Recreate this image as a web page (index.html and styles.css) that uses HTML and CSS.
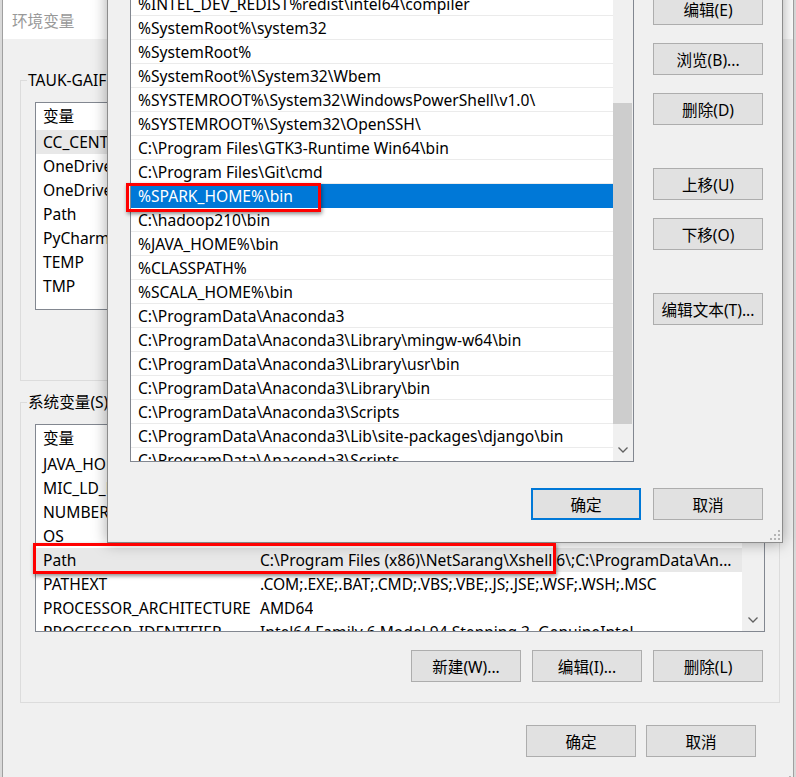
FILE: index.html
```html
<!DOCTYPE html>
<html lang="zh-CN">
<head>
  <meta charset="UTF-8">
  <meta name="viewport" content="width=device-width, initial-scale=1.0">
  <title>环境变量</title>
  <link rel="stylesheet" href="styles.css">
</head>
<body>
<div class="desktop">

  <!-- background window: 环境变量 -->
  <div class="window env-window">
    <div class="title-bar">环境变量</div>
    <div class="env-body">

      <div class="group">
        <div class="group-title">TAUK-GAIFU 的用户变量(U)</div>
        <div class="listview">
          <div class="lv-items">
            <div class="lv-row lv-head"><span class="lv-name">变量</span><span class="lv-value">值</span></div>
            <div class="lv-row is-focus"><span class="lv-name">CC_CENTER</span><span class="lv-value">C:\Program Files\CC</span></div>
            <div class="lv-row"><span class="lv-name">OneDrive</span><span class="lv-value">C:\Users\TAUK\OneDrive</span></div>
            <div class="lv-row"><span class="lv-name">OneDriveConsumer</span><span class="lv-value">C:\Users\TAUK\OneDrive</span></div>
            <div class="lv-row"><span class="lv-name">Path</span><span class="lv-value">%USERPROFILE%\AppData\Local\Microsoft\WindowsApps;</span></div>
            <div class="lv-row"><span class="lv-name">PyCharm Community Edition</span><span class="lv-value">C:\Program Files\JetBrains\PyCharm\bin;</span></div>
            <div class="lv-row"><span class="lv-name">TEMP</span><span class="lv-value">%USERPROFILE%\AppData\Local\Temp</span></div>
            <div class="lv-row"><span class="lv-name">TMP</span><span class="lv-value">%USERPROFILE%\AppData\Local\Temp</span></div>
          </div>
        </div>
        <div class="btn-row">
          <button class="btn">新建(N)...</button>
          <button class="btn">编辑(E)...</button>
          <button class="btn">删除(D)</button>
        </div>
      </div>

      <div class="group">
        <div class="group-title">系统变量(S)</div>
        <div class="listview">
          <div class="lv-items">
            <div class="lv-row lv-head"><span class="lv-name">变量</span><span class="lv-value">值</span></div>
            <div class="lv-row"><span class="lv-name">JAVA_HOME</span><span class="lv-value">C:\Program Files\Java\jdk1.8.0_231</span></div>
            <div class="lv-row"><span class="lv-name">MIC_LD_LIBRARY_PATH</span><span class="lv-value">%INTEL_DEV_REDIST%compiler\lib\mic</span></div>
            <div class="lv-row"><span class="lv-name">NUMBER_OF_PROCESSORS</span><span class="lv-value">4</span></div>
            <div class="lv-row"><span class="lv-name">OS</span><span class="lv-value">Windows_NT</span></div>
            <div class="lv-row is-focus"><span class="lv-name">Path</span><span class="lv-value">C:\Program Files (x86)\NetSarang\Xshell 6\;C:\ProgramData\An...</span></div>
            <div class="lv-row"><span class="lv-name">PATHEXT</span><span class="lv-value">.COM;.EXE;.BAT;.CMD;.VBS;.VBE;.JS;.JSE;.WSF;.WSH;.MSC</span></div>
            <div class="lv-row"><span class="lv-name">PROCESSOR_ARCHITECTURE</span><span class="lv-value">AMD64</span></div>
            <div class="lv-row"><span class="lv-name">PROCESSOR_IDENTIFIER</span><span class="lv-value">Intel64 Family 6 Model 94 Stepping 3, GenuineIntel</span></div>
          </div>
          <div class="lv-scroll">
            <div class="lv-thumb"></div>
            <div class="scroll-down">
              <svg width="10" height="6" viewBox="0 0 10 6"><polyline points="0.5,0.5 5,5 9.5,0.5" fill="none" stroke="#606060" stroke-width="1.3"/></svg>
            </div>
          </div>
        </div>
        <div class="btn-row">
          <button class="btn">新建(W)...</button>
          <button class="btn">编辑(I)...</button>
          <button class="btn">删除(L)</button>
        </div>
      </div>

      <div class="dialog-buttons env-buttons">
        <button class="btn">确定</button>
        <button class="btn">取消</button>
      </div>
    </div>
    <svg class="grip" width="10" height="10" viewBox="0 0 10 10" fill="#b5b5b5">
      <rect x="8" y="0" width="2" height="2"/><rect x="4" y="4" width="2" height="2"/><rect x="8" y="4" width="2" height="2"/>
      <rect x="0" y="8" width="2" height="2"/><rect x="4" y="8" width="2" height="2"/><rect x="8" y="8" width="2" height="2"/>
    </svg>
  </div>

  <!-- foreground window: 编辑环境变量 -->
  <div class="window edit-window">
    <div class="title-bar">编辑环境变量</div>
    <div class="edit-body">
      <div class="edit-main">
        <div class="pathlist">
          <div class="path-items">
            <div class="path-row">C:\Program Files (x86)\NetSarang\Xshell 6\</div>
            <div class="path-row">C:\ProgramData\Oracle\Java\javapath</div>
            <div class="path-row">%INTEL_DEV_REDIST%redist\intel64\compiler</div>
            <div class="path-row">%SystemRoot%\system32</div>
            <div class="path-row">%SystemRoot%</div>
            <div class="path-row">%SystemRoot%\System32\Wbem</div>
            <div class="path-row">%SYSTEMROOT%\System32\WindowsPowerShell\v1.0\</div>
            <div class="path-row">%SYSTEMROOT%\System32\OpenSSH\</div>
            <div class="path-row">C:\Program Files\GTK3-Runtime Win64\bin</div>
            <div class="path-row">C:\Program Files\Git\cmd</div>
            <div class="path-row is-selected">%SPARK_HOME%\bin</div>
            <div class="path-row">C:\hadoop210\bin</div>
            <div class="path-row">%JAVA_HOME%\bin</div>
            <div class="path-row">%CLASSPATH%</div>
            <div class="path-row">%SCALA_HOME%\bin</div>
            <div class="path-row">C:\ProgramData\Anaconda3</div>
            <div class="path-row">C:\ProgramData\Anaconda3\Library\mingw-w64\bin</div>
            <div class="path-row">C:\ProgramData\Anaconda3\Library\usr\bin</div>
            <div class="path-row">C:\ProgramData\Anaconda3\Library\bin</div>
            <div class="path-row">C:\ProgramData\Anaconda3\Scripts</div>
            <div class="path-row">C:\ProgramData\Anaconda3\Lib\site-packages\django\bin</div>
            <div class="path-row">C:\ProgramData\Anaconda3\Scripts</div>
          </div>
          <div class="path-scroll">
            <div class="path-thumb"></div>
            <div class="scroll-down">
              <svg width="10" height="6" viewBox="0 0 10 6"><polyline points="0.5,0.5 5,5 9.5,0.5" fill="none" stroke="#606060" stroke-width="1.3"/></svg>
            </div>
          </div>
        </div>
        <div class="side-buttons">
          <button class="btn">新建(N)</button>
          <button class="btn">编辑(E)</button>
          <button class="btn">浏览(B)...</button>
          <button class="btn">删除(D)</button>
          <button class="btn btn-gap">上移(U)</button>
          <button class="btn">下移(O)</button>
          <button class="btn btn-gap">编辑文本(T)...</button>
        </div>
      </div>
      <div class="dialog-buttons">
        <button class="btn is-default">确定</button>
        <button class="btn">取消</button>
      </div>
    </div>
    <svg class="grip" width="10" height="10" viewBox="0 0 10 10" fill="#b5b5b5">
      <rect x="8" y="0" width="2" height="2"/><rect x="4" y="4" width="2" height="2"/><rect x="8" y="4" width="2" height="2"/>
      <rect x="0" y="8" width="2" height="2"/><rect x="4" y="8" width="2" height="2"/><rect x="8" y="8" width="2" height="2"/>
    </svg>
  </div>

  <!-- red annotation boxes -->
  <div class="mark mark-spark"></div>
  <div class="mark mark-path"></div>

</div>
</body>
</html>
```

FILE: styles.css
```css
* {
  box-sizing: border-box;
}

body {
  margin: 0;
  font-family: "Noto Sans", "Noto Sans CJK SC", sans-serif;
  font-size: 15.6px;
  color: #000;
  background: #d9d9d9;
}

.desktop {
  position: relative;
  width: 796px;
  height: 777px;
  overflow: hidden;
}

/* windows on the desktop */
.window {
  position: absolute;
  background: #f0f0f0;
}

.title-bar {
  height: 39px;
  padding-left: 9px;
  line-height: 43px;
  background: #fff;
  color: #999;
}

.grip {
  position: absolute;
  right: 2px;
  bottom: 2px;
}

.btn {
  display: flex;
  align-items: center;
  justify-content: center;
  width: 110px;
  height: 32px;
  padding: 0;
  border: 1px solid #adadad;
  background: #e1e1e1;
  color: #000;
  font: inherit;
}

.btn.is-default {
  border: 2px solid #0078d7;
}

.dialog-buttons {
  display: flex;
  justify-content: flex-end;
  gap: 12px;
}

/* 环境变量 */
.env-window {
  left: 2px;
  top: -1px;
  width: 792px;
  height: 790px;
  border: 1px solid #a0a0a0;
}

.env-body {
  padding: 41px 13px 0 17px;
}

.group {
  border: 1px solid #dcdcdc;
  padding-bottom: 20px;
}

.group + .group {
  margin-top: 21px;
}

.group-title {
  width: fit-content;
  margin: -11px 0 0 6px;
  padding: 0 1px;
  line-height: 20px;
  background: #f0f0f0;
}

.listview {
  display: flex;
  width: 730px;
  height: 208px;
  margin: 12px 0 0 14px;
  border: 1px solid #828790;
  background: #fff;
  overflow: hidden;
}

.lv-items {
  flex: 1;
  min-width: 0;
}

.lv-row {
  display: flex;
  height: 24px;
  line-height: 24px;
  white-space: nowrap;
}

.lv-row.lv-head {
  height: 27px;
  line-height: 27px;
}

.lv-row.is-focus {
  background: #e8e8e8;
}

.lv-name {
  flex: none;
  width: 217px;
  padding-left: 7px;
  overflow: hidden;
}

.lv-value {
  padding-left: 7px;
  overflow: hidden;
}

.lv-scroll {
  display: flex;
  flex-direction: column;
  width: 22px;
  background: #f0f0f0;
}

.lv-thumb {
  height: 40px;
  margin: 22px 1px 0;
  background: #cdcdcd;
}

.scroll-down {
  display: flex;
  align-items: center;
  justify-content: center;
  height: 22px;
  margin-top: auto;
}

.btn-row {
  display: flex;
  justify-content: flex-end;
  gap: 11px;
  margin-top: 18px;
  padding-right: 16px;
}

.env-buttons {
  margin-top: 22px;
  padding-right: 24px;
  gap: 10px;
}

/* 编辑环境变量 */
.edit-window {
  left: 107px;
  top: -120px;
  width: 676px;
  border: 1px solid #8c8c8c;
  box-shadow: 0 0 14px rgba(0, 0, 0, 0.35);
}

.edit-body {
  padding: 23px 19px 22px 22px;
}

.edit-main {
  display: flex;
  align-items: flex-start;
}

.pathlist {
  display: flex;
  width: 504px;
  height: 519px;
  border: 1px solid #828790;
  background: #fff;
  overflow: hidden;
}

.path-items {
  flex: 1;
  min-width: 0;
}

.path-row {
  height: 24px;
  padding-left: 7px;
  line-height: 24px;
  border-bottom: 1px solid #ebebeb;
  white-space: nowrap;
}

.path-row.is-selected {
  background: #0078d7;
  border-bottom-color: #0078d7;
  color: #fff;
}

.path-scroll {
  display: flex;
  flex-direction: column;
  width: 20px;
  background: #f0f0f0;
}

.path-thumb {
  height: 321px;
  margin: 159px 1px 0 0;
  background: #cdcdcd;
}

.side-buttons {
  display: flex;
  flex-direction: column;
  gap: 18px;
  margin-left: 19px;
}

.side-buttons .btn-gap {
  margin-top: 25px;
}

.edit-window .dialog-buttons {
  margin-top: 26px;
}

/* annotation */
.mark {
  position: absolute;
  border: 3px solid #ff0000;
  box-shadow: 1px 2px 4px rgba(0, 0, 0, 0.45);
}

.mark-spark {
  left: 126px;
  top: 183px;
  width: 195px;
  height: 29px;
}

.mark-path {
  left: 33px;
  top: 543px;
  width: 523px;
  height: 31px;
}
```
